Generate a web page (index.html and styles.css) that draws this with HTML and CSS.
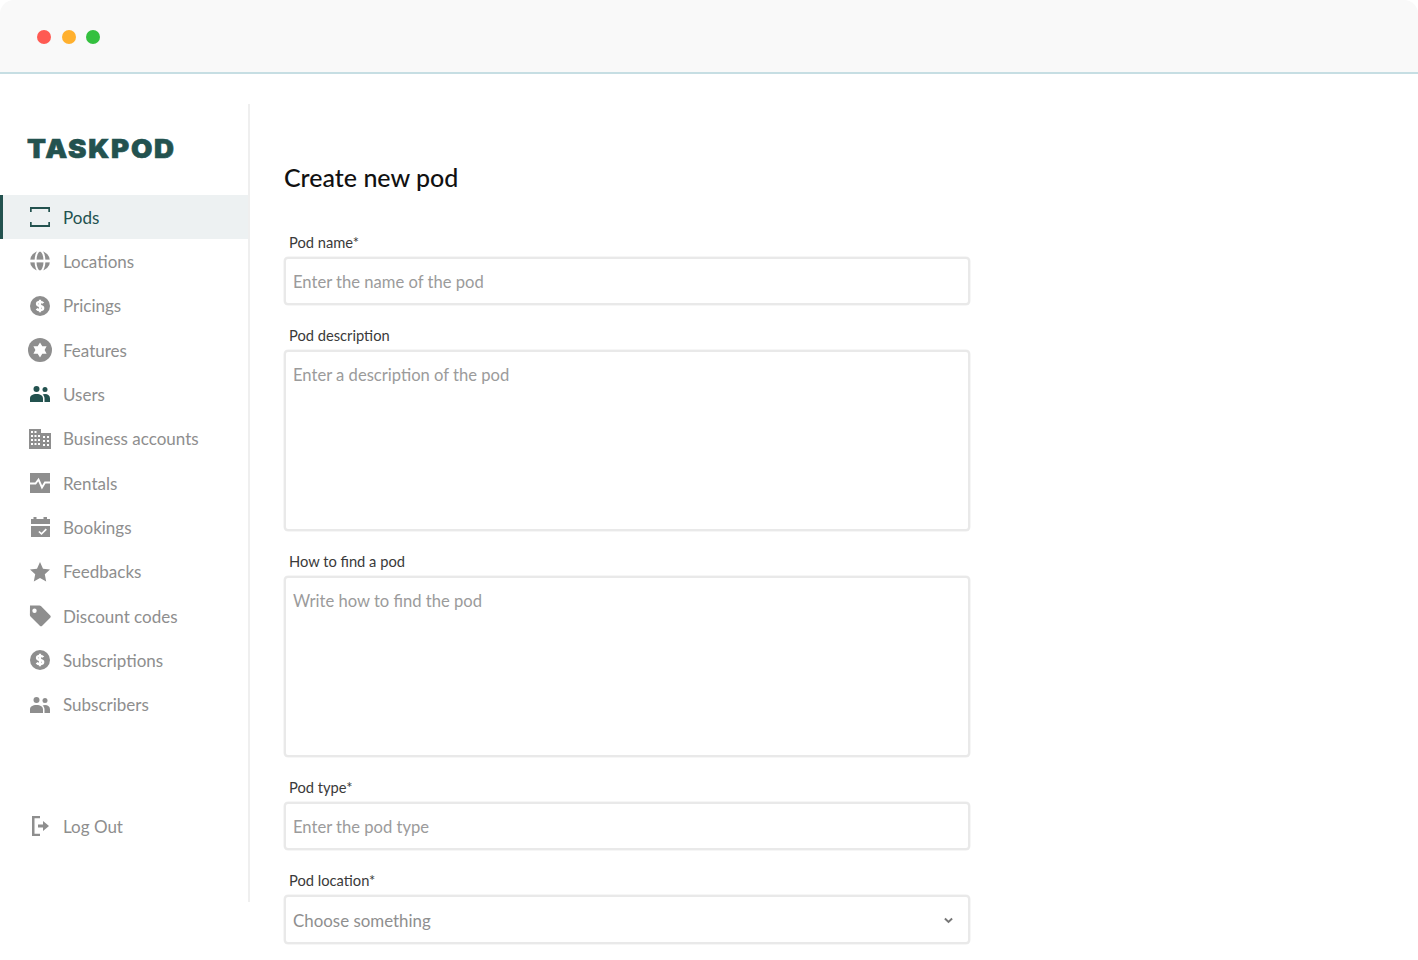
FILE: index.html
```html
<!DOCTYPE html>
<html lang="en">
<head>
<meta charset="utf-8">
<title>Taskpod</title>
<link rel="stylesheet" href="styles.css">
</head>
<body>
<header class="titlebar">
  <span class="dot dot-red"></span>
  <span class="dot dot-yellow"></span>
  <span class="dot dot-green"></span>
</header>
<div class="app">
  <aside class="sidebar">
    <div class="logo"><span class="logo-text">TASKPOD</span></div>
    <nav class="nav">
      <a class="nav-item active"><svg class="icon" viewBox="0 0 20 20"><path d="M0 0h20v5h-1.700V2H1.700v3H0zM0 15h1.700v3h16.600v-3H20v5H0z"/></svg><span>Pods</span></a>
      <a class="nav-item"><svg class="icon" viewBox="0 0 20 20"><circle cx="10" cy="10" r="10"/><g class="cut"><ellipse cx="10" cy="10" rx="4.500" ry="10.500"/><path d="M0 10h20" stroke-width="2.800"/></g></svg><span>Locations</span></a>
      <a class="nav-item"><svg class="icon" viewBox="0 0 20 20"><circle cx="10" cy="10" r="10"/><g class="cut"><path d="M13.300 7.200C12.700 6.300 11.500 5.800 10 5.800c-1.800 0-3 .9-3 2.100 0 3 6.200 1.200 6.200 4.200 0 1.300-1.300 2.100-3.200 2.100-1.500 0-2.700-.6-3.400-1.500M10 3.800v12.400" stroke-width="2.300"/></g></svg><span>Pricings</span></a>
      <a class="nav-item"><svg class="icon icon-lg" viewBox="0 0 24 24"><circle cx="12" cy="12" r="12"/><path class="star" d="M12 4.500l2.300 3.700 4.300.1-2 3.700 2 3.700-4.300.1L12 19.500l-2.300-3.700-4.300-.1 2-3.700-2-3.700 4.300-.1z"/></svg><span>Features</span></a>
      <a class="nav-item teal"><svg class="icon" viewBox="0 0 20 20"><circle cx="6.500" cy="5" r="3"/><circle cx="15" cy="5.500" r="2.500"/><path d="M0 18v-3.500C0 11.500 2.500 10 6.500 10s6.500 1.500 6.500 4.500V18zM14.500 18v-3.500c0-1.800-.7-3.100-1.900-4 .7-.3 1.500-.5 2.400-.5 3 0 5 1.500 5 4.500V18z"/></svg><span>Users</span></a>
      <a class="nav-item"><svg class="icon icon-bld" viewBox="0 0 22 20"><path fill-rule="evenodd" d="M0 0h12v4h10v16H0zM2 2v2h2V2zm3.500 0v2h2V2zM2 6v2h2V6zm3.500 0v2h2V6zM9 6v2h2V6zM2 10v2h2v-2zm3.500 0v2h2v-2zM9 10v2h2v-2zM2 14v2h2v-2zm3.500 0v2h2v-2zM9 14v2h2v-2zM14 7v2h2V7zm4 0v2h2V7zm-4 4v2h2v-2zm4 0v2h2v-2zm-4 4v2h2v-2zm4 0v2h2v-2z"/></svg><span>Business accounts</span></a>
      <a class="nav-item"><svg class="icon" viewBox="0 0 20 20"><rect width="20" height="20"/><path class="cut" d="M0 10.500h5.500L8.500 6.500l3.500 8 3-5h5" stroke-width="2.600"/></svg><span>Rentals</span></a>
      <a class="nav-item"><svg class="icon" viewBox="0 0 20 20"><path fill-rule="evenodd" d="M3.500 0h3v2h7V0h3.500v2H20v5H1V2h2.500zM1 9h19v11H1zm14.700 2.500-4.200 4.200-2-1.800-1.200 1.200 3.200 3 5.400-5.400z"/></svg><span>Bookings</span></a>
      <a class="nav-item"><svg class="icon" viewBox="0 0 20 20"><path d="m10 0 3 6.700 7 .8-5.200 4.800 1.400 7.200L10 16l-6.200 3.500 1.400-7.200L0 7.500l7-.8z"/></svg><span>Feedbacks</span></a>
      <a class="nav-item"><svg class="icon icon-tag" viewBox="0 0 22 22"><path fill-rule="evenodd" d="M1 .5h9.500c.5 0 1 .2 1.400.6l9.300 9.300c.7.700.7 1.700 0 2.400l-8 8c-.7.700-1.700.7-2.400 0L1.500 11.500C1.100 11.100.9 10.600.9 10.100zM5.500 3.500a2.200 2.200 0 1 0 0 4.400 2.200 2.200 0 0 0 0-4.400z"/></svg><span>Discount codes</span></a>
      <a class="nav-item"><svg class="icon" viewBox="0 0 20 20"><circle cx="10" cy="10" r="10"/><g class="cut"><path d="M13.300 7.200C12.700 6.300 11.500 5.800 10 5.800c-1.800 0-3 .9-3 2.100 0 3 6.200 1.200 6.200 4.200 0 1.300-1.300 2.100-3.200 2.100-1.500 0-2.700-.6-3.400-1.500M10 3.800v12.400" stroke-width="2.300"/></g></svg><span>Subscriptions</span></a>
      <a class="nav-item"><svg class="icon" viewBox="0 0 20 20"><circle cx="6.500" cy="5" r="3"/><circle cx="15" cy="5.500" r="2.500"/><path d="M0 18v-3.500C0 11.500 2.500 10 6.500 10s6.500 1.500 6.500 4.500V18zM14.500 18v-3.500c0-1.800-.7-3.100-1.900-4 .7-.3 1.500-.5 2.400-.5 3 0 5 1.500 5 4.500V18z"/></svg><span>Subscribers</span></a>
    </nav>
    <a class="nav-item logout"><svg class="icon" viewBox="0 0 20 20"><path d="M2 0h8v2.200H4.500v15.600H10V20H2z"/><path d="M8 8.500h5V5l6 5-6 5v-3.500H8z"/></svg><span>Log Out</span></a>
  </aside>
  <main class="content">
    <h1 class="title">Create new pod</h1>
    <form class="form">
      <div class="field">
        <label class="label" for="name">Pod name*</label>
        <input class="control" id="name" type="text" placeholder="Enter the name of the pod">
      </div>
      <div class="field">
        <label class="label" for="desc">Pod description</label>
        <textarea class="control area" id="desc" placeholder="Enter a description of the pod"></textarea>
      </div>
      <div class="field">
        <label class="label" for="how">How to find a pod</label>
        <textarea class="control area" id="how" placeholder="Write how to find the pod"></textarea>
      </div>
      <div class="field">
        <label class="label" for="type">Pod type*</label>
        <input class="control" id="type" type="text" placeholder="Enter the pod type">
      </div>
      <div class="field">
        <label class="label" for="loc">Pod location*</label>
        <div class="select-wrap">
          <select class="control select" id="loc"><option>Choose something</option></select>
          <svg class="chevron" viewBox="0 0 10 7"><path d="M1 1.200 5 5l4-3.800" fill="none" stroke="currentColor" stroke-width="2.200"/></svg>
        </div>
      </div>
    </form>
  </main>
</div>
</body>
</html>
```
FILE: styles.css
```css
* { box-sizing: border-box; }
html, body { height: 100%; }
body {
  margin: 0;
  height: 960px;
  overflow: hidden;
  background: #fff;
  color: #111;
  font-family: "Lato", "Open Sans", sans-serif;
}
.titlebar {
  height: 74px;
  background: #f9f9f9;
  border-bottom: 2px solid #c6dee3;
  border-radius: 14px 14px 0 0;
  display: flex;
  align-items: center;
  gap: 10.5px;
  padding: 2px 0 0 37px;
}
.dot { width: 14px; height: 14px; border-radius: 50%; }
.dot-red { background: #ff5a52; }
.dot-yellow { background: #ffb02e; }
.dot-green { background: #34c03f; }
.app { display: flex; align-items: flex-start; padding-top: 30px; }
.sidebar {
  width: 250px;
  height: 798px;
  flex: none;
  border-right: 2px solid #efefef;
  display: flex;
  flex-direction: column;
}
.logo {
  height: 91px;
  padding: 29px 0 0 27px;
  font-family: "Inter", sans-serif;
  font-weight: 900;
  font-size: 25.5px;
  line-height: 32px;
  letter-spacing: 1.6px;
  color: #23524f;
}
.logo-text {
  display: inline-block;
  -webkit-text-stroke: 0.6px #23524f;
  transform: scaleX(1.085);
  transform-origin: left center;
}
.nav { display: grid; grid-auto-rows: 44.33px; }
.nav-item {
  display: flex;
  align-items: center;
  padding-left: 30px;
  gap: 13px;
  font-size: 17px;
  color: #8e8e8e;
  position: relative;
}
.nav-item.active {
  background: #edf1f2;
  color: #23524f;
  border-left: 3px solid #23524f;
  padding-left: 27px;
}
.icon {
  width: 20px;
  height: 20px;
  flex: none;
  fill: currentColor;
}
.icon .cut { fill: none; stroke: #fff; stroke-width: 1.9; }
.icon .star { fill: #fff; }
.icon-lg { width: 24px; height: 24px; margin: 0 -2px; }
.icon-bld { width: 22px; height: 20px; margin: 0 -1px; }
.icon-tag { width: 22px; height: 22px; margin: 0 -1px; }
.nav-item.teal .icon { color: #23524f; }
.logout { height: 44px; margin-top: 77px; flex: none; }
.logout span { padding-top: 2px; }
.content { padding-left: 34px; width: 720px; flex: none; }
.title {
  margin: 57px 0 0;
  height: 40px;
  font-size: 25px;
  line-height: 32px;
  font-weight: 500;
  color: #111;
}
.form { display: flex; flex-direction: column; gap: 21px; margin-top: 32px; }
.field { display: flex; flex-direction: column; }
.label {
  height: 18px;
  line-height: 18px;
  margin: 0 0 6px 5px;
  font-size: 14.7px;
  color: #3a3a3a;
}
.control {
  display: block;
  width: 100%;
  height: 48px;
  padding: 2px 7px 0;
  border: 2px solid #e9e9e9;
  border-radius: 4px;
  background: #fff;
  box-shadow: 0 0 0 0.5px #eeeeee;
  font: 16.6px "Lato", "Open Sans", sans-serif;
  color: #8f8f8f;
  outline: none;
}
.control::placeholder { color: #9b9b9b; opacity: 1; }
.area { height: 181px; padding-top: 12px; resize: none; line-height: 22px; }
.select-wrap { position: relative; }
.select { height: 49px; appearance: none; -webkit-appearance: none; font-size: 16.9px; }
.chevron {
  position: absolute;
  right: 17px;
  top: 22px;
  width: 9px;
  height: 7px;
  color: #777;
}
```
